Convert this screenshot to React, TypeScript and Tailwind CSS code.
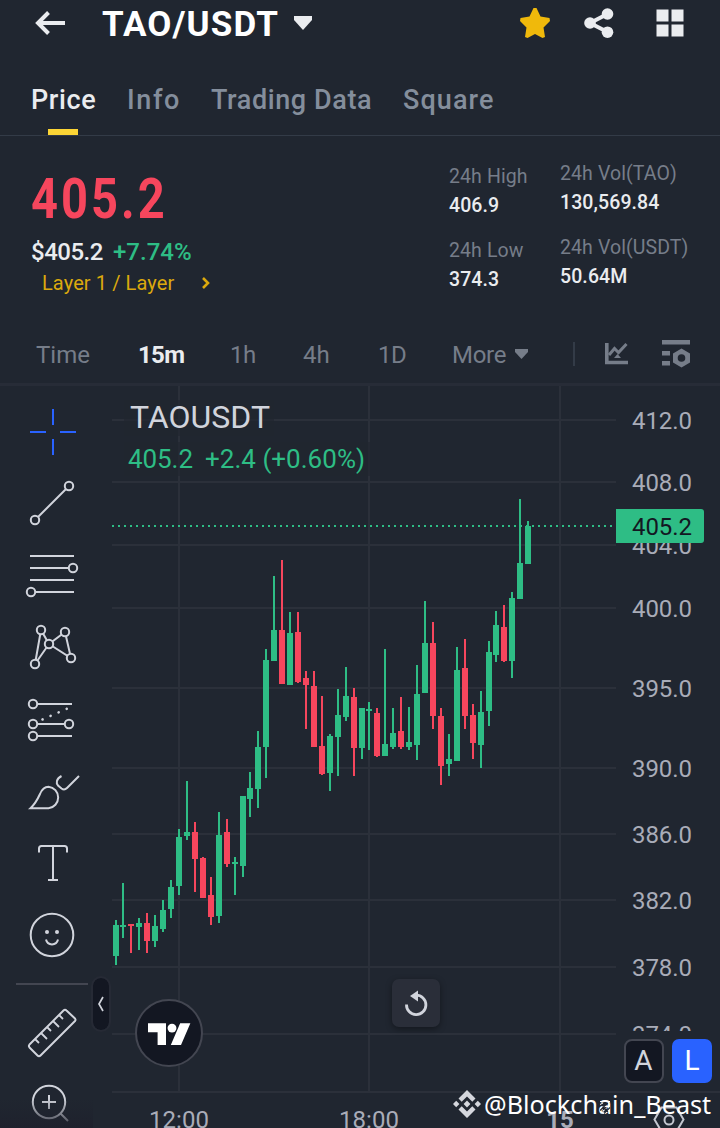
import type { ReactNode } from "react";

type Candle = [x: number, high: number, low: number, top: number, bottom: number, up: 0 | 1];

const candles: Candle[] = [
  [116, 920, 965, 925, 956, 1], [123, 883, 938, 925, 927, 1], [131, 924, 953, 924, 926, 0],
  [139, 918, 950, 923, 927, 1], [147, 913, 953, 923, 941, 0], [155, 915, 947, 926, 941, 1],
  [163, 900, 932, 910, 929, 1], [171, 880, 918, 887, 909, 1], [179, 829, 895, 837, 886, 1],
  [187, 781, 840, 832, 836, 1], [195, 822, 892, 832, 859, 0], [203, 857, 898, 858, 898, 0],
  [211, 877, 925, 895, 917, 0], [219, 812, 923, 835, 916, 1], [227, 819, 867, 832, 864, 0],
  [235, 857, 895, 862, 864, 1], [243, 796, 877, 796, 866, 1], [250, 772, 817, 788, 799, 1],
  [258, 731, 808, 747, 789, 1], [266, 649, 778, 660, 747, 1], [274, 576, 661, 630, 661, 1],
  [282, 560, 684, 630, 684, 0], [290, 612, 685, 633, 685, 1], [298, 612, 683, 632, 682, 0],
  [306, 671, 729, 678, 685, 0], [314, 671, 747, 686, 747, 0], [322, 696, 775, 746, 774, 0],
  [330, 734, 791, 736, 773, 1], [338, 689, 776, 715, 737, 1], [346, 667, 721, 696, 717, 1],
  [354, 688, 776, 697, 748, 0], [362, 708, 759, 708, 748, 1], [369, 702, 750, 709, 711, 1],
  [377, 708, 757, 713, 756, 0], [385, 649, 756, 744, 756, 1], [393, 708, 749, 733, 747, 1],
  [401, 697, 749, 731, 747, 0], [409, 707, 750, 742, 747, 1], [417, 665, 760, 694, 745, 1],
  [425, 601, 693, 643, 693, 1], [433, 622, 729, 643, 716, 0], [441, 708, 785, 716, 766, 0],
  [449, 734, 776, 759, 764, 1], [457, 647, 761, 670, 761, 1], [465, 639, 729, 668, 716, 0],
  [473, 704, 759, 715, 743, 0], [481, 691, 768, 712, 745, 1], [489, 641, 726, 652, 711, 1],
  [496, 611, 662, 625, 655, 1], [504, 605, 662, 627, 661, 0], [512, 592, 678, 598, 661, 1],
  [520, 499, 599, 563, 599, 1], [528, 521, 564, 526, 564, 1],
];

const priceLines: [number, string][] = [
  [420, "412.0"], [482, "408.0"], [545, "404.0"], [608, "400.0"], [688, "395.0"],
  [768, "390.0"], [834, "386.0"], [900, "382.0"], [967, "378.0"], [1034, "374.0"],
];

function Dot({ x, y }: { x: number; y: number }) {
  return <circle cx={x} cy={y} r="4.2" className="fill-[#202630]" />;
}

const tools: { name: string; art: ReactNode }[] = [
  {
    name: "cross",
    art: <path stroke="#2962ff" d="M53 409V425M53 439V455M30 432H46M60 432H76" />,
  },
  { name: "trend", art: <><path d="M35 520L69 486" /><Dot x={35} y={520} /><Dot x={69} y={486} /></> },
  {
    name: "fib",
    art: <><path d="M30 556H74M30 568H73M30 580H74M31 592H74" /><Dot x={73} y={568} /><Dot x={31} y={592} /></>,
  },
  {
    name: "pattern",
    art: (
      <>
        <path d="M35 664L41 630L49 644L65 632L71 658L49 644L35 664" />
        <Dot x={41} y={630} /><Dot x={65} y={632} /><Dot x={49} y={644} /><Dot x={71} y={658} /><Dot x={35} y={664} />
      </>
    ),
  },
  {
    name: "forecast",
    art: (
      <>
        <path d="M33 704H72M33 724H69M33 736H72" />
        <path strokeDasharray="0.1 8.7" strokeLinecap="round" strokeWidth="2.6" d="M42.5 719.5L68.5 708" />
        <Dot x={33} y={704} /><Dot x={33} y={724} /><Dot x={69} y={724} /><Dot x={33} y={736} />
      </>
    ),
  },
  {
    name: "brush",
    art: (
      <path d="M30.5 808.2C35 804 37.5 799.5 40 794C42 789 45 786.7 48.5 786.7A10.7 10.8 0 0 1 48.5 808.2ZM61.5 776C56 779 56 783 58 785.5L61.5 788.5C63.5 790 65.5 789.5 67 788L79 776" />
    ),
  },
  { name: "text", art: <path d="M39 852.5V848.5Q39 846 41.5 846H64.5Q67 846 67 848.5V852.5M53 846V880M48 880H58" /> },
  {
    name: "emoji",
    art: (
      <>
        <circle cx="52" cy="935" r="21.3" />
        <path d="M46 939.5C47.5 946 56.500 946 58 939.500" />
        <circle cx="47" cy="932" r="2" fill="#d1d4dc" stroke="none" />
        <circle cx="57" cy="932" r="2" fill="#d1d4dc" stroke="none" />
      </>
    ),
  },
];

function Tool({ top, height, children }: { top: number; height: number; children: ReactNode }) {
  return (
    <svg width="93" height={height} viewBox={`0 ${top} 93 ${height}`} fill="none" stroke="#d1d4dc" strokeWidth="2" className="block shrink-0">
      {children}
    </svg>
  );
}

function Toolbar() {
  return (
    <aside className="flex h-full w-[112px] shrink-0 overflow-hidden">
      <div className="flex w-[93px] flex-col pt-[10px]">
        {tools.map((t, i) => (
          <Tool key={t.name} top={396 + i * 72} height={72}>{t.art}</Tool>
        ))}
        <div className="mt-[11px] ml-4 h-[2px] w-[72px] shrink-0 bg-[#434651]" />
        <Tool top={985} height={88}>
          <path strokeLinejoin="round" d="M63.500 1010.500Q65 1009 66.500 1010.500L75 1018.500Q76 1019.800 75 1021L40.500 1055.500Q39 1057 37.500 1055.500L29.500 1047.500Q28.300 1046 29.500 1044.500Z" />
          <path d="M59 1015L63 1019M53 1021L59 1027M47 1027L51 1031M41 1033L47 1039M35 1039L39 1043" strokeWidth="1.8" />
        </Tool>
        <Tool top={1073} height={55}>
          <defs>
            <linearGradient id="fade" x1="0" y1="1098" x2="0" y2="1128" gradientUnits="userSpaceOnUse">
              <stop offset="0" stopColor="#1e222d" stopOpacity="0" />
              <stop offset="1" stopColor="#1e202c" stopOpacity="0.85" />
            </linearGradient>
          </defs>
          <circle cx="49" cy="1102" r="16.2" />
          <path d="M42 1102H56M49 1095V1109M60.500 1113.500L68 1121" />
          <rect x="0" y="1098" width="93" height="30" fill="url(#fade)" stroke="none" />
        </Tool>
      </div>
      <div className="flex w-[19px] flex-col pt-[592px]">
        <div className="flex h-[52px] w-4 items-center justify-center rounded-lg bg-[#131722] outline-2 outline-[#262a35]">
          <svg width="8" height="16" viewBox="0 0 8 16" fill="none" stroke="#d1d4dc" strokeWidth="1.7"><path d="M6 1L2 8L6 15" /></svg>
        </div>
      </div>
    </aside>
  );
}

function Chart() {
  return (
    <svg width="608" height="742" viewBox="112 386 608 742" className="block shrink-0 font-[Roboto,sans-serif]">
      <g className="fill-[#2b303a]">
        {[179, 369, 560].map((x) => <rect key={x} x={x - 1} y="386" width="2" height="705" />)}
        {priceLines.map(([y]) => <rect key={y} x="112" y={y - 1} width="504" height="2" />)}
        <rect x="112" y="1091" width="608" height="2" />
      </g>
      <rect x="124" y="400" width="150" height="36" fill="#202630" opacity=".65" />
      <rect x="124" y="442" width="246" height="34" fill="#202630" opacity=".65" />
      <path d="M112 526H616" stroke="#2ebd85" strokeWidth="2" strokeDasharray="2 4" />
      {candles.map(([x, high, low, top, bottom, up]) => (
        <g key={x} className={up ? "fill-[#2ebd85]" : "fill-[#f6465d]"}>
          <rect x={x - 1} y={high} width="2" height={low - high} />
          <rect x={x - 3} y={top} width="6" height={bottom - top} />
        </g>
      ))}
      <text x="130" y="428" fontSize="31.500" textLength="140" lengthAdjust="spacingAndGlyphs" className="fill-[#d1d4dc]">TAOUSDT</text>
      <g fontSize="26" className="fill-[#2ebd85]">
        <text x="128" y="468" textLength="65">405.2</text>
        <text x="205" y="468" textLength="160">+2.4 (+0.60%)</text>
      </g>
      <clipPath id="scale"><rect x="616" y="386" width="104" height="645" /></clipPath>
      <g fontSize="24" clipPath="url(#scale)" className="fill-[#a9acb8]">
        {priceLines.map(([y, label]) => <text key={y} x="632" y={y + 9} textLength="60">{label}</text>)}
      </g>
      <path d="M616 509H701Q704 509 704 512V540Q704 543 701 543H616Z" className="fill-[#2ebd85]" />
      <text x="632" y="535" fontSize="24" textLength="60" className="fill-[#131722]">405.2</text>
      <g fontSize="24" textAnchor="middle" className="fill-[#a9acb8]">
        <text x="179" y="1128">12:00</text>
        <text x="369" y="1128">18:00</text>
        <text x="560" y="1128" fontWeight="700">15</text>
      </g>
      <path d="M661.500 1107.500H676.500L683.500 1119.500L676.500 1131.500H661.500L654.500 1119.500Z" fill="none" stroke="#c4c7d0" strokeWidth="2" />
      <circle cx="669" cy="1120" r="4.500" fill="none" stroke="#c4c7d0" strokeWidth="2" />
      <circle cx="169" cy="1033" r="33" fill="#131722" stroke="#434651" strokeWidth="2" />
      <g transform="translate(148 1018.500) scale(1.2)" fill="#fff">
        <path d="M15 22H8V11.500H0V4h15v18zM27.500 22h-8.500l7.800-18h8.500z" />
        <circle cx="20" cy="8" r="3.700" />
      </g>
      <rect x="392" y="979" width="48" height="48" rx="7" fill="#2a2e39" className="drop-shadow-[0_2px_3px_rgba(0,0,0,0.4)]" />
      <path d="M406.500 1004.500A9.700 9.700 0 1 0 416 995.200" fill="none" stroke="#d1d4dc" strokeWidth="2.800" />
      <path d="M410 996L418 990.500V1001.500Z" fill="#d1d4dc" />
      <rect x="625" y="1040" width="38" height="42" rx="7" fill="#131722" stroke="#434651" strokeWidth="2" />
      <rect x="672" y="1039" width="40" height="44" rx="7" fill="#2962ff" />
      <g fontSize="28" textAnchor="middle">
        <text x="643.500" y="1070" fill="#d1d4dc">A</text>
        <text x="692" y="1070" fill="#fff">L</text>
      </g>
    </svg>
  );
}

function Stat({ label, value }: { label: string; value: string }) {
  return (
    <div className="h-[74px] text-[19.5px] leading-[28px] whitespace-nowrap">
      <div className="h-[29px] tracking-[0.1px] text-[#767d89]">{label}</div>
      <div className="font-medium tracking-[0.1px] text-[#eaecef]">{value}</div>
    </div>
  );
}

function Header() {
  return (
    <header className="flex h-[46px] items-center text-[#eaecef]">
      <svg width="30" height="24" viewBox="0 0 30 24" fill="none" stroke="currentColor" strokeWidth="4" className="ml-[35px]">
        <path d="M30 12H3M13.500 1.500L3 12L13.500 22.500" />
      </svg>
      <h1 className="ml-[37px] w-[192px] pt-[4px] text-[35px] leading-[44px] font-bold tracking-[1.1px] whitespace-nowrap text-white">TAO/USDT</h1>
      <svg width="18" height="14" viewBox="0 0 18 14" fill="currentColor"><path d="M0 0H18V4L9 14L0 4Z" /></svg>
      <svg width="30" height="30" viewBox="0 0 30 30" fill="#f0b90b" className="ml-[208px]">
        <path d="M13.500 0H16.500L20.500 8.500L29.500 10L30 13L23.500 19.500L25 29L22.500 30L15 26L7.500 30L5 29L6.500 19.500L0 13L.5 10L9.500 8.500Z" />
      </svg>
      <svg width="30" height="30" viewBox="0 0 30 30" fill="currentColor" className="ml-[34px]">
        <path d="M23.500 6L6 15L23.500 24" fill="none" stroke="currentColor" strokeWidth="4" />
        <circle cx="23.500" cy="6" r="5.800" /><circle cx="6" cy="15" r="5.800" /><circle cx="23.500" cy="24.200" r="5.800" />
      </svg>
      <svg width="28" height="28" viewBox="0 0 28 28" fill="currentColor" className="ml-[42px]">
        <path d="M.5.500H12.500V12.500H.5ZM15.500.500H27.500V12.500H15.500ZM.5 15.500H12.500V27.500H.5ZM15.500 15.500H27.500V27.500H15.500Z" />
      </svg>
    </header>
  );
}

export default function App() {
  return (
    <main className="relative flex h-[1128px] w-[720px] flex-col overflow-hidden bg-[#202630] font-[Roboto,sans-serif]">
      <Header />
      <nav className="flex h-[90px] shrink-0 border-b border-[#333b47] pt-[36px] pl-[31px] text-[27px] leading-9 font-medium whitespace-nowrap text-[#848e9c]">
        <div className="flex w-24 flex-col text-[#eaecef]">
          <span className="tracking-[0.6px]">Price</span>
          <span className="mt-[11px] ml-[17px] h-[6px] w-[30px] bg-[#fcd535]" />
        </div>
        <span className="w-[84px] tracking-[1.6px]">Info</span>
        <span className="w-[192px] tracking-[0.6px]">Trading Data</span>
        <span className="tracking-[1.1px]">Square</span>
      </nav>
      <section className="flex h-[188px] shrink-0">
        <div className="w-[449px] pt-[32px] pl-[31px] whitespace-nowrap">
          <div className="h-[64px] origin-left scale-x-[0.84] text-[56px] leading-[62px] font-bold tracking-[3.6px] text-[#f6465d]">405.2</div>
          <div className="flex h-[36px] pt-[4px] text-[24px] leading-[32px] font-medium">
            <span className="w-[82px] tracking-[-0.5px] text-[#eaecef]">$405.2</span>
            <span className="text-[#2ebd85]">+7.74%</span>
          </div>
          <div className="flex items-center pl-[11px] text-[20px] leading-[30px] tracking-[0.1px] text-[#dba90d]">
            <span className="w-[160px]">Layer 1 / Layer</span>
            <svg width="8" height="12" viewBox="0 0 8 12" fill="none" stroke="currentColor" strokeWidth="2.600"><path d="M1 1L6 6L1 11" /></svg>
          </div>
        </div>
        <div className="w-[111px] pt-[27px]">
          <Stat label="24h High" value="406.9" />
          <Stat label="24h Low" value="374.3" />
        </div>
        <div className="pt-[24px]">
          <Stat label="24h Vol(TAO)" value="130,569.84" />
          <Stat label="24h Vol(USDT)" value="50.64M" />
        </div>
      </section>
      <div className="flex h-[59px] shrink-0 items-center pl-9 text-[24px] leading-8 whitespace-nowrap text-[#767d89]">
        <span className="w-[102px] pt-[2px]">Time</span>
        <span className="w-[92px] pt-[2px] font-bold tracking-[-0.7px] text-[#eaecef]">15m</span>
        <span className="w-[73px] pt-[2px] tracking-[-0.5px]">1h</span>
        <span className="w-[75px] pt-[2px]">4h</span>
        <span className="w-[74px] pt-[2px] tracking-[-0.5px]">1D</span>
        <span className="w-[63px] pt-[2px] tracking-[-0.3px]">More</span>
        <svg width="13" height="10" viewBox="0 0 13 10" fill="currentColor"><path d="M0 0H13V3L6.500 10L0 3Z" /></svg>
        <span className="ml-[45px] h-6 w-[2px] bg-[#333b47]" />
        <svg width="23" height="22" viewBox="0 0 23 22" fill="none" stroke="currentColor" strokeWidth="3" className="ml-[30px]">
          <path d="M1.800 0V19.500H23" strokeWidth="3.600" />
          <path d="M4 12L9.500 5.500L13.500 9.500L21.500 1" /><path d="M9 15L12.500 11L16 15Z" fill="currentColor" stroke="none" />
        </svg>
        <svg width="29" height="28" viewBox="0 0 29 28" fill="currentColor" className="ml-[34px]">
          <path d="M0 0H28V4.500H0ZM0 11H8V15.500H0ZM0 21H8V25.500H0Z" />
          <path fillRule="evenodd" d="M19.500 8.500L28 13.500V22.500L19.500 27.500L11 22.500V13.500ZM19.500 14.200A3.800 3.800 0 1 0 19.500 21.800A3.800 3.800 0 1 0 19.500 14.200Z" />
        </svg>
      </div>
      <div className="h-[3px] shrink-0 bg-[#272c37]" />
      <div className="flex h-[742px] shrink-0">
        <Toolbar />
        <Chart />
      </div>
      <div className="absolute top-[1088px] left-[453px] flex items-center font-['Noto_Sans',sans-serif] text-[25.2px] leading-[32px] whitespace-nowrap text-white">
        <svg width="28" height="28" viewBox="0 0 28 28" fill="#d5d7dd">
          <path d="M14 0L22.500 8.500L19.300 11.700L14 6.400L8.700 11.700L5.500 8.500ZM14 28L22.500 19.500L19.300 16.300L14 21.600L8.700 16.300L5.500 19.500ZM3.200 10.800L6.400 14L3.200 17.200L0 14ZM24.800 10.800L28 14L24.800 17.200L21.600 14ZM14 10.600L17.400 14L14 17.400L10.600 14Z" />
        </svg>
        <span className="ml-[3px]">
          @Blockch
          <span className="relative">
            a
            <svg width="12" height="15" viewBox="0 0 12 15" fill="none" className="absolute right-[1px] bottom-[6px]">
              <path d="M1 1.500H11M1 4.500L4 3M2 13.500L10 5.500M1 8L5 11M7 13L11 9.500" stroke="#fff" strokeWidth="1" />
              <path d="M3 6L9 3M1 10.500L7 4.500M5 13.500L11 7.500M4 7L9 12" stroke="#202630" strokeWidth="1.100" />
            </svg>
          </span>
          in_Beast
        </span>
      </div>
    </main>
  );
}
